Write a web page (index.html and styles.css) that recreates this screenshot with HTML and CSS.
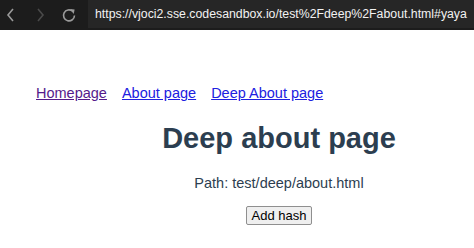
FILE: index.html
```html
<!DOCTYPE html>
<html>
<head>
<meta charset="utf-8">
<link rel="stylesheet" href="styles.css">
</head>
<body>
<div class="chrome">
  <div class="navbtns">
    <svg class="ico" width="12" height="16" viewBox="0 0 12 16"><path d="M8 2 L3 8 L8 14" fill="none" stroke="#9a9a9a" stroke-width="1.6"/></svg>
    <svg class="ico fwd" width="12" height="16" viewBox="0 0 12 16"><path d="M4 2 L9 8 L4 14" fill="none" stroke="#4a4a4a" stroke-width="1.6"/></svg>
    <svg class="ico reload" width="16" height="16" viewBox="0 0 16 16"><path d="M13.5 8.5 A5.5 5.5 0 1 1 11.6 4.2" fill="none" stroke="#9a9a9a" stroke-width="1.6"/><path d="M9 2 L13.6 2.6 L12.7 7 Z" fill="#9a9a9a"/></svg>
  </div>
  <div class="url">https://vjoci2.sse.codesandbox.io/test%2Fdeep%2Fabout.html#yaya</div>
</div>
<div class="page">
  <nav class="links">
    <a href="#" class="visited">Homepage</a>
    <a href="#">About page</a>
    <a href="#">Deep About page</a>
  </nav>
  <main class="app">
    <h1 class="title">Deep about page</h1>
    <p class="path">Path: test/deep/about.html</p>
    <button class="btn">Add hash</button>
  </main>
</div>
</body>
</html>
```
FILE: styles.css
```css
html, body { margin: 0; padding: 0; background: #fff; }
body { font-family: "Liberation Sans", Arial, sans-serif; }
.chrome {
  height: 30px;
  background: #1c1c1c;
  display: flex;
  align-items: center;
}
.navbtns { display: flex; align-items: center; width: 88px; padding-left: 5px; box-sizing: border-box; }
.ico { display: block; }
.fwd { margin-left: 17px; }
.reload { margin-left: 15px; }
.url {
  flex: 1;
  height: 28px;
  line-height: 28px;
  margin-bottom: 2px;
  background: #262626;
  color: #f2f2f2;
  font-family: "Liberation Sans", Arial, sans-serif;
  font-size: 12.3px;
  padding-left: 7px;
  white-space: nowrap;
  overflow: hidden;
}
.page { padding: 55px 0 0 36px; }
.links { display: flex; gap: 15px; font-size: 14.5px; line-height: 17px; }
.links a { color: #2020e0; text-decoration: underline; }
.links a.visited { color: #551a8b; }
.app { text-align: center; padding-left: 48px; color: #2c3e50; }
.title { font-size: 29px; font-weight: bold; margin: 18px 0 0; line-height: 36px; }
.path { font-size: 14.5px; margin: 18px 0 0; line-height: 18px; }
.btn {
  margin-top: 14px;
  font-family: "Liberation Sans", Arial, sans-serif;
  font-size: 13px;
  padding: 1px 5px;
  background: #efefef;
  border: 1px solid #8f8f8f;
  border-radius: 2px;
  color: #000;
}
```
